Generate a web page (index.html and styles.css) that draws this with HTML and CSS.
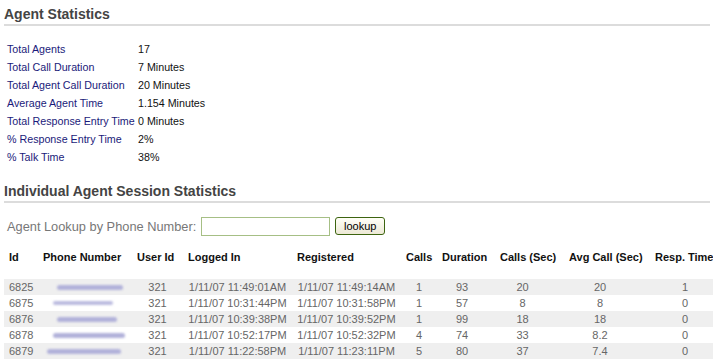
FILE: index.html
```html
<!DOCTYPE html>
<html lang="en">
<head>
    <meta charset="UTF-8">
    <title>Agent Statistics</title>
    <link rel="stylesheet" href="styles.css">
</head>
<body>
    <div class="page">
        <h2 class="section-title">Agent Statistics</h2>
        <table class="summary">
            <tr><td class="label">Total Agents</td><td>17</td></tr>
            <tr><td class="label">Total Call Duration</td><td>7 Minutes</td></tr>
            <tr><td class="label">Total Agent Call Duration</td><td>20 Minutes</td></tr>
            <tr><td class="label">Average Agent Time</td><td>1.154 Minutes</td></tr>
            <tr><td class="label">Total Response Entry Time</td><td>0 Minutes</td></tr>
            <tr><td class="label">% Response Entry Time</td><td>2%</td></tr>
            <tr><td class="label">% Talk Time</td><td>38%</td></tr>
        </table>

        <h2 class="section-title">Individual Agent Session Statistics</h2>
        <form class="lookup" onsubmit="return false;">
            <label for="phone">Agent Lookup by Phone Number:</label>
            <input type="text" id="phone">
            <button type="submit">lookup</button>
        </form>

        <table class="sessions">
            <colgroup>
                <col class="w-id"><col class="w-phone"><col class="w-user"><col class="w-date"><col class="w-date">
                <col class="w-calls"><col class="w-dur"><col class="w-sec"><col class="w-avg"><col class="w-resp">
            </colgroup>
            <thead>
                <tr>
                    <th>Id</th><th>Phone Number</th><th>User Id</th><th>Logged In</th><th>Registered</th>
                    <th>Calls</th><th>Duration</th><th>Calls (Sec)</th><th>Avg Call (Sec)</th><th>Resp. Time</th>
                </tr>
            </thead>
            <tbody>
                <tr>
                    <td class="id">6825</td><td><span class="blur blur-1"></span></td><td>321</td>
                    <td>1/11/07 11:49:01AM</td><td>1/11/07 11:49:14AM</td>
                    <td>1</td><td class="dur">93</td><td class="sec">20</td><td class="avg">20</td><td>1</td>
                </tr>
                <tr>
                    <td class="id">6875</td><td><span class="blur blur-2"></span></td><td>321</td>
                    <td>1/11/07 10:31:44PM</td><td>1/11/07 10:31:58PM</td>
                    <td>1</td><td class="dur">57</td><td class="sec">8</td><td class="avg">8</td><td>0</td>
                </tr>
                <tr>
                    <td class="id">6876</td><td><span class="blur blur-3"></span></td><td>321</td>
                    <td>1/11/07 10:39:38PM</td><td>1/11/07 10:39:52PM</td>
                    <td>1</td><td class="dur">99</td><td class="sec">18</td><td class="avg">18</td><td>0</td>
                </tr>
                <tr>
                    <td class="id">6878</td><td><span class="blur blur-4"></span></td><td>321</td>
                    <td>1/11/07 10:52:17PM</td><td>1/11/07 10:52:32PM</td>
                    <td>4</td><td class="dur">74</td><td class="sec">33</td><td class="avg">8.2</td><td>0</td>
                </tr>
                <tr>
                    <td class="id">6879</td><td><span class="blur blur-5"></span></td><td>321</td>
                    <td>1/11/07 11:22:58PM</td><td>1/11/07 11:23:11PM</td>
                    <td>5</td><td class="dur">80</td><td class="sec">37</td><td class="avg">7.4</td><td>0</td>
                </tr>
            </tbody>
        </table>
    </div>
</body>
</html>
```

FILE: styles.css
```css
html, body {
    overflow: hidden;
}
body {
    margin: 0;
    font-family: 'Liberation Sans', Arial, sans-serif;
    font-size: 11px;
    color: #111;
    background: white;
}
.page {
    padding: 0 3px 0 4px;
}
.section-title {
    margin: 0;
    padding: 5px 0 1px 0;
    font-size: 14px;
    line-height: 18px;
    font-weight: bold;
    color: #444;
    border-bottom: 2px solid #dcdcdc;
}
.summary {
    border-collapse: collapse;
    margin: 14px 0 11px 0;
    font-size: 10.7px;
}
.summary td {
    padding: 0;
    height: 18px;
    line-height: 18px;
    white-space: nowrap;
}
.summary .label {
    width: 131px;
    padding-left: 3px;
    color: #1a1a7a;
}
.lookup {
    display: flex;
    align-items: center;
    gap: 5px;
    margin: 13px 0 0 0;
    padding-left: 3px;
    height: 20px;
}
.lookup label {
    font-size: 12.8px;
    color: #777;
}
.lookup input {
    width: 129px;
    height: 19px;
    box-sizing: border-box;
    border: 1px solid #a6bf85;
    padding: 0 3px;
    margin: 0;
}
.lookup button {
    width: 50px;
    height: 18px;
    box-sizing: border-box;
    padding: 0;
    font-family: 'Liberation Sans', Arial, sans-serif;
    font-size: 11px;
    color: #000;
    border: 1px solid #3d6410;
    border-radius: 3px;
    background: linear-gradient(#fffff8, #ede9d6);
    cursor: pointer;
}
.sessions {
    border-collapse: collapse;
    table-layout: fixed;
    width: 716px;
    margin-top: 12px;
}
.w-id { width: 34px; }
.w-phone { width: 94px; }
.w-user { width: 51px; }
.w-date { width: 109px; }
.w-calls { width: 36px; }
.w-dur { width: 58px; }
.w-sec { width: 69px; }
.w-avg { width: 86px; }
.w-resp { width: 70px; }
.sessions th {
    text-align: left;
    padding: 0 0 13px 5px;
    line-height: 18px;
    font-weight: bold;
    color: #111;
    white-space: nowrap;
}
.sessions td {
    text-align: center;
    padding: 0;
    height: 16px;
    line-height: 16px;
    color: #666;
    white-space: nowrap;
}
.sessions tbody tr:nth-child(odd) {
    background: #efefef;
}
.sessions td.id {
    text-align: left;
    padding-left: 5px;
}
.sessions td.dur {
    padding-right: 8px;
}
.sessions td.sec, .sessions td.avg {
    padding-right: 14px;
}
.blur {
    display: block;
    height: 5px;
    background: #b2b2da;
    border-radius: 3px;
    filter: blur(1px);
}
.blur-1 { width: 66px; margin-left: 19px; }
.blur-2 { width: 60px; margin-left: 15px; height: 4px; background: #bcbce0; }
.blur-3 { width: 60px; margin-left: 19px; }
.blur-4 { width: 72px; margin-left: 15px; }
.blur-5 { width: 74px; margin-left: 9px; }
```
